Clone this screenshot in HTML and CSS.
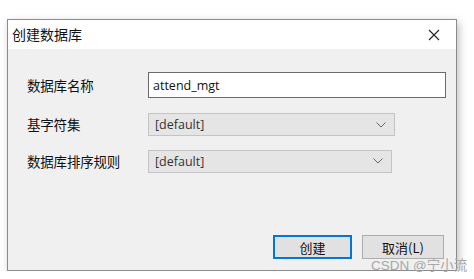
FILE: index.html
```html
<!DOCTYPE html>
<html lang="zh-CN">
<head>
    <meta charset="UTF-8">
    <title>创建数据库</title>
    <link rel="stylesheet" href="styles.css">
</head>
<body>
    <div class="dialog">
        <div class="titlebar">
            <span class="title">创建数据库</span>
            <svg class="close" width="12" height="12" viewBox="0 0 12 12">
                <path d="M1 1 L11 11 M11 1 L1 11" stroke="#222" stroke-width="1.1" fill="none"/>
            </svg>
        </div>
        <div class="content">
            <div class="form">
                <label class="label">数据库名称</label>
                <input class="text-input" type="text" value="attend_mgt">
                <label class="label">基字符集</label>
                <div class="select select-wide">
                    <span>[default]</span>
                    <svg width="10" height="6" viewBox="0 0 10 6"><path d="M0.5 0.5 L5 5 L9.5 0.5" stroke="#666" stroke-width="1" fill="none"/></svg>
                </div>
                <label class="label label-last">数据库排序规则</label>
                <div class="select select-narrow">
                    <span>[default]</span>
                    <svg width="10" height="6" viewBox="0 0 10 6"><path d="M0.5 0.5 L5 5 L9.5 0.5" stroke="#666" stroke-width="1" fill="none"/></svg>
                </div>
            </div>
            <div class="buttons">
                <button class="btn btn-primary">创建</button>
                <button class="btn">取消(L)</button>
            </div>
        </div>
    </div>
    <div class="watermark">CSDN @宁小流</div>
</body>
</html>
```

FILE: styles.css
```css
body {
    margin: 0;
    background-color: #ffffff;
    font-family: "Noto Sans CJK SC", "Noto Sans", sans-serif;
    color: #111111;
}
.dialog {
    margin: 19px 0 0 7px;
    width: 448px;
    height: 250px;
    border: 1px solid #8c8c8c;
    box-shadow: 2px 3px 8px rgba(0, 0, 0, 0.25);
    display: flex;
    flex-direction: column;
    background-color: #f0f0f0;
}
.titlebar {
    height: 29px;
    background-color: #ffffff;
    display: flex;
    align-items: center;
    justify-content: space-between;
    padding: 0 16px 0 4px;
}
.title {
    font-size: 14px;
    margin-top: -2px;
}
.close {
    margin-top: 1px;
}
.content {
    flex: 1;
    display: flex;
    flex-direction: column;
    padding: 23px 12px 11px 19px;
}
.form {
    display: grid;
    grid-template-columns: 121px auto;
    grid-template-rows: 26px 23px 23px;
    row-gap: 15px;
    align-items: center;
}
.label {
    font-size: 13.5px;
    letter-spacing: -0.2px;
    margin-top: -1px;
}
.label-last,
.select-narrow {
    margin-top: -3px;
}
.text-input {
    box-sizing: border-box;
    width: 298px;
    height: 26px;
    margin: 0;
    border: 1px solid #6a6a6a;
    padding: 0 4px;
    font-family: "Open Sans", "Noto Sans", sans-serif;
    font-size: 12.5px;
    color: #111;
    background: #ffffff;
    outline: none;
}
.select {
    box-sizing: border-box;
    height: 23px;
    border: 1px solid #c4c4c4;
    background-color: #e5e5e5;
    display: flex;
    align-items: center;
    justify-content: space-between;
    padding: 0 8px 0 6px;
    font-family: "Open Sans", "Noto Sans", sans-serif;
    font-size: 12.5px;
    color: #333;
}
.select-wide {
    width: 247px;
}
.select-narrow {
    width: 244px;
}
.buttons {
    margin-top: auto;
    display: flex;
    justify-content: flex-end;
    gap: 10px;
}
.btn {
    box-sizing: border-box;
    height: 24px;
    width: 82px;
    border: 1px solid #adadad;
    background-color: #e1e1e1;
    font-family: "Noto Sans CJK SC", sans-serif;
    font-size: 13px;
    color: #111;
    padding: 0;
}
.btn-primary {
    width: 79px;
    border: 2px solid #0078d7;
}
.watermark {
    position: absolute;
    left: 371px;
    top: 254px;
    font-family: "Liberation Sans", "Noto Sans CJK SC", sans-serif;
    font-size: 13.5px;
    color: #a8a8a8;
}
```
